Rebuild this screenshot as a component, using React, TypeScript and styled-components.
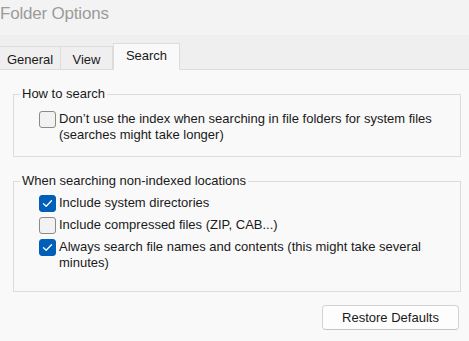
import React from "react";
import styled, { createGlobalStyle } from "styled-components";

const Global = createGlobalStyle`
  html, body { margin: 0; padding: 0; background: #f9f9f9; }
  body { font-family: "Liberation Sans", Arial, sans-serif; font-size: 13px; color: #1a1a1a; }
  * { box-sizing: border-box; }
`;

const Window = styled.div`
  width: 469px;
  height: 341px;
  overflow: hidden;
  background: #f9f9f9;
  display: flex;
  flex-direction: column;
`;

const TitleBar = styled.div`
  height: 35px;
  background: #f3f3f3;
  color: #9b9b9b;
  font-size: 17px;
  line-height: 20px;
  padding-top: 4px;
  padding-left: 0;
  letter-spacing: -0.2px;
`;

const TabStrip = styled.div`
  height: 35px;
  background: #efefef;
  border-bottom: 1px solid #dcdcdc;
  display: flex;
  align-items: flex-end;
`;

const Tab = styled.div<{ $active?: boolean; $w: number }>`
  width: ${(p) => p.$w}px;
  height: ${(p) => (p.$active ? 27 : 24)}px;
  margin-bottom: -1px;
  background: ${(p) => (p.$active ? "#f9f9f9" : "#efefef")};
  border: 1px solid #dcdcdc;
  border-bottom: ${(p) => (p.$active ? "1px solid #f9f9f9" : "1px solid #dcdcdc")};
  border-left-width: ${(p) => (p.$active ? 1 : 0)}px;
  display: flex;
  justify-content: center;
  padding-top: ${(p) => (p.$active ? 4 : 5)}px;
  line-height: 16px;
  color: #1a1a1a;
`;

const Body = styled.div`
  flex: 1;
  padding: 16px 8px 0 13px;
  display: flex;
  flex-direction: column;
`;

const Group = styled.fieldset<{ $pt: number; $pb: number; $mb: number }>`
  margin: 0 0 ${(p) => p.$mb}px 0;
  padding: ${(p) => p.$pt}px 10px ${(p) => p.$pb}px 6px;
  border: 1px solid #dcdcdc;
  min-width: 0;
`;

const Legend = styled.legend`
  margin-left: 0;
  padding: 0 2px 0 2px;
  line-height: 16px;
  color: #1a1a1a;
`;

const List = styled.div`
  display: flex;
  flex-direction: column;
  gap: 5px;
  padding-left: 19px;
`;

const Row = styled.label`
  display: flex;
  align-items: flex-start;
  gap: 3px;
  line-height: 16px;
  color: #1a1a1a;
`;

const Box = styled.span<{ $checked?: boolean }>`
  flex: none;
  width: 17px;
  height: 17px;
  border-radius: 3px;
  border: 1px solid ${(p) => (p.$checked ? "#005fb8" : "#8a8a8a")};
  background: ${(p) => (p.$checked ? "#005fb8" : "#f2f2f2")};
  display: flex;
  align-items: center;
  justify-content: center;
`;

const Footer = styled.div`
  display: flex;
  justify-content: flex-end;
  padding-right: 2px;
`;

const Button = styled.button`
  width: 137px;
  height: 25px;
  border: 1px solid #d3d3d3;
  border-bottom-color: #c4c4c4;
  border-radius: 4px;
  background: #fdfdfd;
  font-family: "Liberation Sans", Arial, sans-serif;
  font-size: 13px;
  color: #1a1a1a;
  padding: 0;
`;

const Check = () => (
  <svg width="11" height="9" viewBox="0 0 11 9">
    <path d="M1.5 4.8 L4.2 7.3 L9.5 1.8" fill="none" stroke="#fff" strokeWidth="1.3" strokeLinecap="round" strokeLinejoin="round" />
  </svg>
);

const CheckRow = ({ checked, children }: { checked?: boolean; children: React.ReactNode }) => (
  <Row>
    <Box $checked={checked}>{checked && <Check />}</Box>
    <span>{children}</span>
  </Row>
);

export default function App() {
  return (
    <Window>
      <Global />
      <TitleBar>Folder Options</TitleBar>
      <TabStrip>
        <Tab $w={61}>General</Tab>
        <Tab $w={52}>View</Tab>
        <Tab $w={67} $active>Search</Tab>
      </TabStrip>
      <Body>
        <Group $pt={9} $pb={13} $mb={16}>
          <Legend>How to search</Legend>
          <List>
            <CheckRow>
              Don’t use the index when searching in file folders for system files
              <br />
              (searches might take longer)
            </CheckRow>
          </List>
        </Group>
        <Group $pt={6} $pb={20} $mb={13}>
          <Legend>When searching non-indexed locations</Legend>
          <List>
            <CheckRow checked>Include system directories</CheckRow>
            <CheckRow>Include compressed files (ZIP, CAB...)</CheckRow>
            <CheckRow checked>
              Always search file names and contents (this might take several
              <br />
              minutes)
            </CheckRow>
          </List>
        </Group>
        <Footer>
          <Button>Restore Defaults</Button>
        </Footer>
      </Body>
    </Window>
  );
}
